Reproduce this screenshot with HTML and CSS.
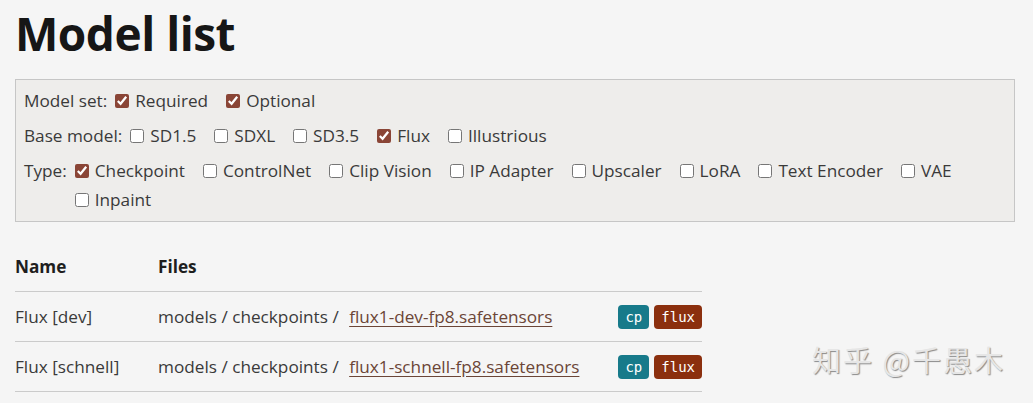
FILE: index.html
```html
<!DOCTYPE html>
<html>
<head>
<meta charset="utf-8">
<link rel="stylesheet" href="styles.css">
</head>
<body>
<h1 class="title">Model list</h1>
<div class="filters">
  <div class="filter-row">
    <span class="filter-label">Model set:</span>
    <div class="options">
      <label class="opt"><input type="checkbox" checked>Required</label>
      <label class="opt"><input type="checkbox" checked>Optional</label>
    </div>
  </div>
  <div class="filter-row">
    <span class="filter-label">Base model:</span>
    <div class="options">
      <label class="opt"><input type="checkbox">SD1.5</label>
      <label class="opt"><input type="checkbox">SDXL</label>
      <label class="opt"><input type="checkbox">SD3.5</label>
      <label class="opt"><input type="checkbox" checked>Flux</label>
      <label class="opt"><input type="checkbox">Illustrious</label>
    </div>
  </div>
  <div class="filter-row">
    <span class="filter-label">Type:</span>
    <div class="options">
      <label class="opt"><input type="checkbox" checked>Checkpoint</label>
      <label class="opt"><input type="checkbox">ControlNet</label>
      <label class="opt"><input type="checkbox">Clip Vision</label>
      <label class="opt"><input type="checkbox">IP Adapter</label>
      <label class="opt"><input type="checkbox">Upscaler</label>
      <label class="opt"><input type="checkbox">LoRA</label>
      <label class="opt"><input type="checkbox">Text Encoder</label>
      <label class="opt"><input type="checkbox">VAE</label>
      <label class="opt"><input type="checkbox">Inpaint</label>
    </div>
  </div>
</div>
<table class="models">
  <thead>
    <tr><th class="col-name">Name</th><th>Files</th><th></th></tr>
  </thead>
  <tbody>
    <tr>
      <td>Flux [dev]</td>
      <td>models / checkpoints / <a href="#">flux1-dev-fp8.safetensors</a></td>
      <td class="tags"><div class="tag-list"><span class="tag tag-cp">cp</span><span class="tag tag-flux">flux</span></div></td>
    </tr>
    <tr>
      <td>Flux [schnell]</td>
      <td>models / checkpoints / <a href="#">flux1-schnell-fp8.safetensors</a></td>
      <td class="tags"><div class="tag-list"><span class="tag tag-cp">cp</span><span class="tag tag-flux">flux</span></div></td>
    </tr>
  </tbody>
</table>
<div class="watermark">知乎 @千愚木</div>
</body>
</html>
```
FILE: styles.css
```css
html, body {
  margin: 0;
  background: #f5f5f5;
}
body {
  padding: 0 15px;
  font-family: "Open Sans", "Noto Sans", sans-serif;
  font-size: 17.2px;
  color: #3a3a3a;
  position: relative;
  height: 403px;
  box-sizing: border-box;
  overflow: hidden;
}
.title {
  margin: 0;
  padding-top: 2px;
  font-size: 46px;
  line-height: 62px;
  font-weight: 700;
  color: #161616;
  letter-spacing: -0.5px;
}
.filters {
  margin-top: 15px;
  width: 1000px;
  box-sizing: border-box;
  background: #eeedeb;
  border: 1px solid #c6c6c6;
  padding: 6px 8px 7px 8px;
  display: flex;
  flex-direction: column;
  gap: 6px;
}
.filter-row {
  display: flex;
  align-items: flex-start;
  line-height: 29px;
}
.filter-label {
  margin-right: 8px;
  white-space: nowrap;
}
.options {
  display: flex;
  flex-wrap: wrap;
  column-gap: 18px;
  flex: 1;
}
.opt {
  display: inline-flex;
  align-items: center;
  white-space: nowrap;
}
.opt input {
  margin: 0 6px 0 0;
  width: 14px;
  height: 14px;
  accent-color: #8a4536;
}
.models {
  margin-top: 20px;
  border-collapse: collapse;
  width: 687px;
}
.models th, .models td {
  height: 49px;
  padding: 0;
  text-align: left;
  border-bottom: 1px solid #cbcbcb;
  vertical-align: middle;
  white-space: nowrap;
}
.models th {
  font-weight: 700;
  color: #1e1e1e;
}
.col-name {
  width: 143px;
}
.models a {
  margin-left: 6px;
  color: #6b4537;
  text-decoration: underline;
  text-underline-offset: 3px;
}
.tag-list {
  display: flex;
  justify-content: flex-end;
  gap: 5px;
}
.tag {
  display: block;
  font-family: "DejaVu Sans Mono", "Liberation Mono", monospace;
  font-size: 14px;
  line-height: 24px;
  height: 24px;
  padding: 0 7px;
  border-radius: 4px;
  color: #fff;
}
.tag-cp {
  background: #177a8a;
}
.tag-flux {
  background: #8b2f0e;
}
.watermark {
  position: absolute;
  left: 812px;
  top: 338px;
  font-family: "Noto Sans CJK SC", sans-serif;
  font-size: 29px;
  color: #e6e6e6;
  text-shadow: 1px 1px 1px #8a8a8a;
  letter-spacing: 2px;
}
```
